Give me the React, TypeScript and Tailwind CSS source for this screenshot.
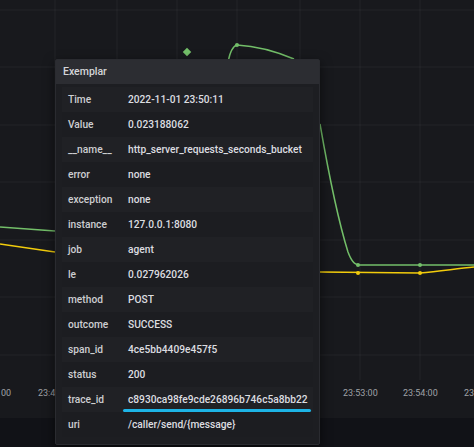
import React from 'react'

const rows: [string, string][] = [
  ['Time', '2022-11-01 23:50:11'],
  ['Value', '0.023188062'],
  ['__name__', 'http_server_requests_seconds_bucket'],
  ['error', 'none'],
  ['exception', 'none'],
  ['instance', '127.0.0.1:8080'],
  ['job', 'agent'],
  ['le', '0.027962026'],
  ['method', 'POST'],
  ['outcome', 'SUCCESS'],
  ['span_id', '4ce5bb4409e457f5'],
  ['status', '200'],
  ['trace_id', 'c8930ca98fe9cde26896b746c5a8bb22'],
  ['uri', '/caller/send/{message}'],
]

const vLines = [55, 117, 177, 237, 300, 360, 420]
const hLines = [10, 67, 125, 182, 240, 297, 355]

function Chart() {
  return (
    <svg className="absolute inset-0" width={474} height={418} viewBox="0 0 474 418">
      {vLines.map((x) => (
        <line key={x} x1={x} y1={0} x2={x} y2={380} stroke="#ffffff" strokeOpacity={0.05} />
      ))}
      {hLines.map((y) => (
        <line key={y} x1={0} y1={y} x2={474} y2={y} stroke="#ffffff" strokeOpacity={0.05} />
      ))}
      {/* green series */}
      <path d="M0 227 L55 231" stroke="#73bf69" strokeWidth={1.5} fill="none" />
      <path d="M228 62 C230 52 233 46 237 45 C255 46 275 51 294 59" stroke="#73bf69" strokeWidth={1.5} fill="none" />
      <path d="M320 124 C328 170 338 220 348 252 C351 260 354 265 360 265 L474 265" stroke="#73bf69" strokeWidth={1.5} fill="none" />
      <circle cx={237} cy={45} r={2} fill="#73bf69" />
      <circle cx={358} cy={265} r={2} fill="#73bf69" />
      <circle cx={420} cy={265} r={2} fill="#73bf69" />
      <rect x={184} y={49} width={6} height={6} fill="#73bf69" transform="rotate(45 187 52)" />
      {/* yellow series */}
      <path d="M0 244 L55 252" stroke="#f2cc0c" strokeWidth={1.5} fill="none" />
      <path d="M320 272 L420 273 C440 271 455 269 474 267" stroke="#f2cc0c" strokeWidth={1.5} fill="none" />
      <circle cx={358} cy={273} r={2} fill="#f2cc0c" />
      <circle cx={420} cy={273} r={2} fill="#f2cc0c" />
      <g fill="#9fa1a7" fontSize={9} fontFamily="Roboto, sans-serif">
        <text x={1} y={396}>00</text>
        <text x={38} y={396}>23:4</text>
        <text x={343} y={396}>23:53:00</text>
        <text x={403} y={396}>23:54:00</text>
        <text x={464} y={396}>23</text>
      </g>
    </svg>
  )
}

export default function App() {
  return (
    <div className="relative w-[474px] h-[447px] overflow-hidden bg-[#111217] font-['Roboto',sans-serif]">
      <div className="relative h-[418px] bg-[#18191d]">
        <Chart />
      </div>

      {/* Exemplar tooltip */}
      <div className="absolute left-[55px] top-[59px] w-[265px] rounded-[2px] border border-[#2a2b30] bg-[#1d1e22] shadow-[0_4px_12px_rgba(0,0,0,0.6)]">
        <div className="flex h-[24px] items-center bg-[#2c2d32] px-[7px] text-[10.5px] font-medium text-[#d4d5d8]">
          Exemplar
        </div>
        <div className="px-[6px] pb-[7px] pt-[3px]">
          {rows.map(([label, value], i) => (
            <div
              key={label}
              className={`flex h-[25px] items-center text-[10.2px] font-medium ${i % 2 === 0 ? 'bg-[#202125]' : 'bg-[#1c1d21]'}`}
            >
              <div className="w-[60px] shrink-0 pl-[6px] text-[#cdced1]">{label}</div>
              <div className="relative whitespace-nowrap pl-[6px] text-[#dcdde0]">
                {value}
                {label === 'trace_id' && (
                  <div className="absolute -bottom-[5px] left-[1px] -right-[3px] h-[3px] rounded-full bg-[#1db4e6]" />
                )}
              </div>
            </div>
          ))}
        </div>
      </div>
    </div>
  )
}
